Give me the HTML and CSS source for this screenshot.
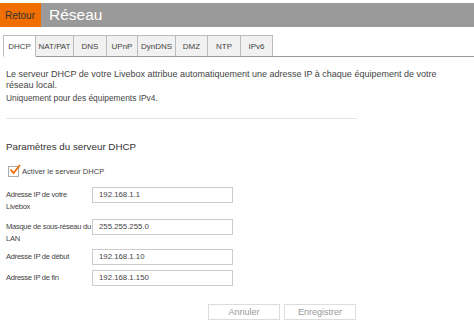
FILE: index.html
```
<!DOCTYPE html>
<html lang="fr">
<head>
<meta charset="utf-8">
<link rel="stylesheet" href="styles.css">
</head>
<body>
<header class="topbar">
  <a class="back">Retour</a>
  <h1 class="title">Réseau</h1>
</header>
<nav class="tabs">
  <span class="tab active">DHCP</span>
  <span class="tab">NAT/PAT</span>
  <span class="tab">DNS</span>
  <span class="tab">UPnP</span>
  <span class="tab">DynDNS</span>
  <span class="tab">DMZ</span>
  <span class="tab">NTP</span>
  <span class="tab">IPv6</span>
  <span class="tab-fill"></span>
</nav>
<main class="content">
  <p class="intro">Le serveur DHCP de votre Livebox attribue automatiquement une adresse IP à chaque équipement de votre réseau local.</p>
  <p class="note">Uniquement pour des équipements IPv4.</p>
  <hr class="sep">
  <h2 class="section">Paramètres du serveur DHCP</h2>
  <label class="check">
    <span class="box"><svg width="12" height="11" viewBox="0 0 12 11"><path d="M1.5 5.5 L4.5 9 L11 1" fill="none" stroke="#f16e00" stroke-width="1.8"/></svg></span>
    Activer le serveur DHCP
  </label>
  <div class="form">
    <div class="row r1"><span class="lbl">Adresse IP de votre<br>Livebox</span><span class="inp">192.168.1.1</span></div>
    <div class="row r2"><span class="lbl">Masque de sous-réseau du<br>LAN</span><span class="inp">255.255.255.0</span></div>
    <div class="row r3"><span class="lbl">Adresse IP de début</span><span class="inp">192.168.1.10</span></div>
    <div class="row r4"><span class="lbl">Adresse IP de fin</span><span class="inp">192.168.1.150</span></div>
  </div>
  <div class="actions">
    <button class="btn">Annuler</button>
    <button class="btn">Enregistrer</button>
  </div>
</main>
</body>
</html>
```
FILE: styles.css
```
* { box-sizing: border-box; }
html, body { margin: 0; padding: 0; background: #fff; }
body { font-family: "Liberation Sans", Arial, sans-serif; color: #444; width: 474px; height: 323px; overflow: hidden; }

.topbar { margin-top: 3px; height: 24px; background: #9a9a9a; display: flex; align-items: center; }
.back { width: 41px; height: 24px; background: #f16e00; color: #333; font-size: 10px; display: flex; align-items: center; padding-left: 5px; }
.title { margin: 0 0 0 8px; font-size: 15.5px; font-weight: normal; color: #fff; }

.tabs { display: flex; margin-top: 8px; padding-left: 3px; height: 22px; }
.tab { height: 22px; border: 1px solid #bbb; border-left: none; border-bottom-color: #999; background: #f1f1f1; font-size: 8px; color: #444; display: flex; align-items: center; justify-content: center; }
.tab:first-child { border-left: 1px solid #bbb; }
.tab.active { background: #fff; border-bottom-color: #fff; }
.tab:nth-child(1) { width: 33px; }
.tab:nth-child(2) { width: 38px; }
.tab:nth-child(3) { width: 33px; }
.tab:nth-child(4) { width: 31px; }
.tab:nth-child(5) { width: 38px; }
.tab:nth-child(6) { width: 32px; }
.tab:nth-child(7) { width: 33px; }
.tab:nth-child(8) { width: 32px; }
.tab-fill { flex: 1; border-bottom: 1px solid #999; }

.content { padding: 0 6px; }
.intro { margin: 12px 0 0; font-size: 9px; line-height: 10.5px; width: 445px; color: #444; }
.note { margin: 3px 0 0; font-size: 8.4px; line-height: 10.5px; color: #444; }
.sep { margin: 14px 0 0; width: 351px; border: none; border-top: 1px solid #e4e4e4; height: 0; }
.section { margin: 21px 0 0; font-size: 9.8px; font-weight: normal; color: #333; line-height: 13px; }
.check { display: flex; align-items: center; margin: 13px 0 0 2px; font-size: 7.6px; color: #444; gap: 3px; }
.box { width: 11px; height: 11px; border: 1px solid #aaa; position: relative; display: inline-block; }
.box svg { position: absolute; left: 0; top: -3px; }

.form { margin-top: 10px; display: flex; flex-direction: column; }
.row { display: flex; align-items: flex-start; }
.r1 { height: 32px; }
.r2 { height: 30px; }
.r3 { height: 21px; }
.r4 { height: 21px; }
.lbl { width: 86px; font-size: 7.6px; line-height: 12px; color: #444; padding-top: 2px; white-space: nowrap; letter-spacing: -0.3px; }
.inp { width: 141px; height: 16px; border: 1px solid #ccc; font-size: 7.8px; color: #444; padding-left: 6px; display: flex; align-items: center; }
.actions { display: flex; gap: 4px; margin: 13px 0 0 202px; }
.btn { width: 72px; height: 16px; border: 1px solid #ddd; background: #fff; font-family: inherit; font-size: 9px; color: #999; padding: 0; }
```
